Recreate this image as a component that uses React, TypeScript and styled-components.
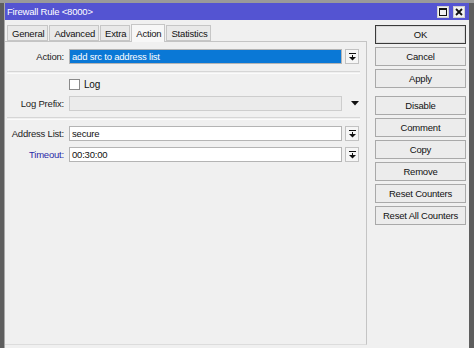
import React from "react";
import styled, { createGlobalStyle } from "styled-components";

const GlobalStyle = createGlobalStyle`
  html, body {
    margin: 0;
    padding: 0;
    background: #6f6f6f;
  }
  body {
    font-family: "Liberation Sans", Arial, sans-serif;
    font-size: 9.5px;
    letter-spacing: -0.2px;
    color: #111;
  }
`;

const Desktop = styled.div`
  width: 474px;
  height: 348px;
  box-sizing: border-box;
  padding: 3px 5px 0 4px;
  background: linear-gradient(to bottom, #9a9a9a 0, #9a9a9a 3px, #5e5e5e 3px);
  overflow: hidden;
`;

const Window = styled.div`
  width: 465px;
  height: 345px;
  display: flex;
  flex-direction: column;
  background: #f0f0f0;
  border-left: 1px solid #a8a8a8;
  box-sizing: border-box;
`;

const TitleBar = styled.div`
  height: 17px;
  flex: none;
  display: flex;
  align-items: center;
  padding: 0 4px 0 2px;
  background: #5454d2;
  color: #fff;
`;

const Title = styled.span`
  flex: 1;
`;

const WinButton = styled.div`
  width: 10px;
  height: 10px;
  margin-left: 4px;
  display: flex;
  align-items: center;
  justify-content: center;
  background: #f2f2f2;
  border: 1px solid #d0d0d0;
`;

const Body = styled.div`
  flex: 1;
  display: flex;
  padding-top: 4px;
  min-height: 0;
`;

const LeftSide = styled.div`
  width: 362px;
  display: flex;
  flex-direction: column;
`;

const TabRow = styled.div`
  height: 17px;
  display: flex;
  align-items: flex-end;
  padding-left: 2px;
`;

const Tab = styled.div<{ active?: boolean }>`
  height: ${({ active }) => (active ? "18px" : "16px")};
  padding: 0 3px 0 4px;
  margin-right: 1px;
  display: flex;
  align-items: center;
  box-sizing: border-box;
  border: 1px solid #c6c6c6;
  border-bottom: ${({ active }) => (active ? "none" : "1px solid #c6c6c6")};
  background: ${({ active }) => (active ? "#f7f7f7" : "#e9e9e9")};
  margin-bottom: ${({ active }) => (active ? "-1px" : "0")};
  position: relative;
`;

const Panel = styled.div`
  flex: 1;
  margin-bottom: 3px;
  border: 1px solid #c4c4c4;
  border-left: none;
  border-bottom-color: #dcdcdc;
  background: #f0f0f0;
  padding: 7px 0 0 1px;
  display: flex;
  flex-direction: column;
`;

const Row = styled.div<{ gap?: number }>`
  display: flex;
  align-items: center;
  margin-top: ${({ gap }) => gap ?? 0}px;
  height: 15px;
`;

const Label = styled.span<{ link?: boolean }>`
  width: 58px;
  margin-right: 5px;
  text-align: right;
  white-space: nowrap;
  color: ${({ link }) => (link ? "#2a2aa6" : "#222")};
`;

const Field = styled.div<{ variant?: "selected" | "disabled" }>`
  width: 273px;
  height: 15px;
  box-sizing: border-box;
  padding-left: 2px;
  display: flex;
  align-items: center;
  white-space: nowrap;
  border: 1px solid
    ${({ variant }) => (variant === "disabled" ? "#cdcdcd" : "#b4b4b4")};
  background: ${({ variant }) =>
    variant === "selected" ? "#0a78d6" : variant === "disabled" ? "#ebebeb" : "#ffffff"};
  color: ${({ variant }) => (variant === "selected" ? "#fff" : "#111")};
`;

const DropButton = styled.div`
  width: 14px;
  height: 15px;
  margin-left: 3px;
  box-sizing: border-box;
  border: 1px solid #c2c2c2;
  background: #f6f6f6;
  display: flex;
  align-items: center;
  justify-content: center;
`;

const PlainArrow = styled.div`
  width: 14px;
  margin-left: 6px;
  display: flex;
  align-items: center;
  justify-content: center;
`;

const Separator = styled.div<{ gap: number }>`
  margin: ${({ gap }) => gap}px 6px 0 1px;
  height: 1px;
  border-top: 1px solid #d6d6d6;
  border-bottom: 1px solid #fbfbfb;
`;

const CheckRow = styled.div`
  display: flex;
  align-items: center;
  margin-top: 5px;
  padding-left: 63px;
  height: 11px;
  font-size: 10px;
`;

const CheckBox = styled.div`
  width: 11px;
  height: 11px;
  box-sizing: border-box;
  border: 1px solid #8a8a8a;
  background: #fff;
  margin-right: 4px;
`;

const Buttons = styled.div`
  width: 91px;
  margin-left: 8px;
  padding-top: 1px;
  display: flex;
  flex-direction: column;
`;

const Button = styled.div<{ primary?: boolean; spaced?: boolean }>`
  height: 19px;
  box-sizing: border-box;
  margin-bottom: ${({ spaced }) => (spaced ? 8 : 3)}px;
  display: flex;
  align-items: center;
  justify-content: center;
  white-space: nowrap;
  background: #ececec;
  border: 1px solid ${({ primary }) => (primary ? "#3a3a3a" : "#a9a9a9")};
  box-shadow: ${({ primary }) => (primary ? "inset 0 0 0 1px #d9d9d9" : "none")};
`;

const DropIcon = () => (
  <svg width="7" height="8" viewBox="0 0 7 8">
    <rect x="0" y="0" width="7" height="1" fill="#111" />
    <rect x="3" y="2" width="1" height="2" fill="#111" />
    <polygon points="0,4 7,4 3.5,7.5" fill="#111" />
  </svg>
);

const TriangleIcon = () => (
  <svg width="8" height="5" viewBox="0 0 8 5">
    <polygon points="0,0 8,0 4,4.5" fill="#111" />
  </svg>
);

const tabs = ["General", "Advanced", "Extra", "Action", "Statistics"];

const actions: { label: string; primary?: boolean; spaced?: boolean }[] = [
  { label: "OK", primary: true },
  { label: "Cancel" },
  { label: "Apply", spaced: true },
  { label: "Disable" },
  { label: "Comment" },
  { label: "Copy" },
  { label: "Remove" },
  { label: "Reset Counters" },
  { label: "Reset All Counters" },
];

const App = () => {
  return (
    <Desktop>
      <GlobalStyle />
      <Window>
        <TitleBar>
          <Title>Firewall Rule &lt;8000&gt;</Title>
          <WinButton>
            <svg width="8" height="8" viewBox="0 0 8 8">
              <rect x="0.5" y="0.5" width="7" height="7" fill="none" stroke="#111" />
              <rect x="0" y="0" width="8" height="2" fill="#111" />
            </svg>
          </WinButton>
          <WinButton>
            <svg width="8" height="8" viewBox="0 0 8 8">
              <path d="M1 1 L7 7 M7 1 L1 7" stroke="#111" strokeWidth="1.8" />
            </svg>
          </WinButton>
        </TitleBar>

        <Body>
          <LeftSide>
            <TabRow>
              {tabs.map(t => (
                <Tab key={t} active={t === "Action"}>
                  {t}
                </Tab>
              ))}
            </TabRow>

            <Panel>
              <Row>
                <Label>Action:</Label>
                <Field variant="selected">add src to address list</Field>
                <DropButton>
                  <DropIcon />
                </DropButton>
              </Row>

              <Separator gap={7} />

              <CheckRow>
                <CheckBox />
                Log
              </CheckRow>

              <Row gap={6}>
                <Label>Log Prefix:</Label>
                <Field variant="disabled" />
                <PlainArrow>
                  <TriangleIcon />
                </PlainArrow>
              </Row>

              <Separator gap={6} />

              <Row gap={6}>
                <Label>Address List:</Label>
                <Field>secure</Field>
                <DropButton>
                  <DropIcon />
                </DropButton>
              </Row>

              <Row gap={6}>
                <Label link>Timeout:</Label>
                <Field>00:30:00</Field>
                <DropButton>
                  <DropIcon />
                </DropButton>
              </Row>
            </Panel>
          </LeftSide>

          <Buttons>
            {actions.map(a => (
              <Button key={a.label} primary={a.primary} spaced={a.spaced}>
                {a.label}
              </Button>
            ))}
          </Buttons>
        </Body>
      </Window>
    </Desktop>
  );
};

export default App;
